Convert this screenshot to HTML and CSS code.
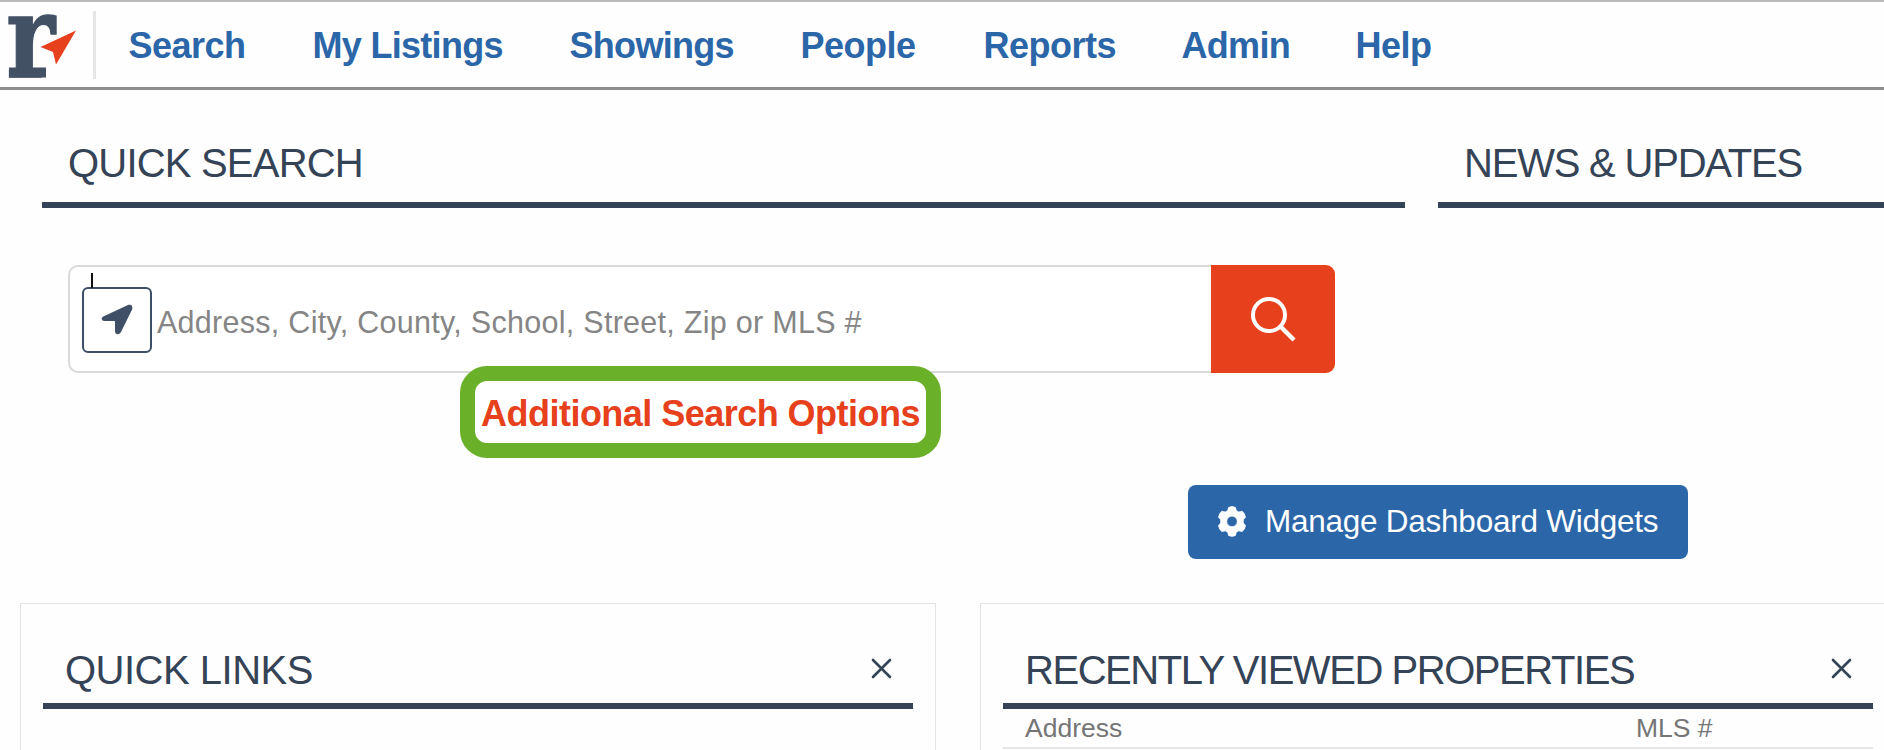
FILE: index.html
```
<!DOCTYPE html>
<html lang="en">
<head>
    <meta charset="UTF-8">
    <meta name="viewport" content="width=device-width, initial-scale=1.0">
    <title>Dashboard</title>
    <link rel="stylesheet" href="styles.css">
</head>
<body>
    <header class="header">
        <a class="logo" href="#">
            <svg width="78" height="68" viewBox="0 0 78 68">
                <text class="logo-letter" transform="translate(6.3 65.6) scale(0.8 1)" x="0" y="0">r</text>
                <rect x="9" y="56.5" width="37" height="10" fill="#435165"/>
                <path d="M76 19.5 L40.5 36 L53 41 L56 53.5 Z" fill="#e6401c"/>
            </svg>
        </a>
        <nav class="nav">
            <a href="#">Search</a>
            <a class="wide" href="#">My Listings</a>
            <a class="wide" href="#">Showings</a>
            <a href="#">People</a>
            <a href="#">Reports</a>
            <a class="wide" href="#">Admin</a>
            <a href="#">Help</a>
        </nav>
    </header>

    <main>
        <div class="top">
            <section class="quick-search">
                <h2 class="title title-search">QUICK SEARCH</h2>
                <form class="search-form">
                    <div class="search-box">
                        <span class="caret"></span>
                        <button class="locate" type="button" aria-label="Use my location">
                            <svg width="32" height="31" viewBox="0 0 32 31">
                                <path d="M2.3 12.5 L27.5 0.8 Q31.8 -0.2 31.3 5 L20 28 Q18.6 30.5 16.3 30.3 Q14.2 30 14 27.5 L14 17 L3.5 17 Q0.8 17 0.6 15 Q0.6 13.3 2.3 12.5 Z" fill="#3f4f65"/>
                            </svg>
                        </button>
                        <span class="placeholder">Address, City, County, School, Street, Zip or MLS #</span>
                    </div>
                    <button class="search-btn" type="button" aria-label="Search">
                        <svg width="46" height="46" viewBox="0 0 46 46">
                            <circle cx="19" cy="19" r="16" fill="none" stroke="#fff" stroke-width="4"/>
                            <path d="M31 31 L44 44" stroke="#fff" stroke-width="4.4"/>
                        </svg>
                    </button>
                </form>
                <a class="more-options" href="#">Additional Search Options</a>
            </section>

            <section class="news">
                <h2 class="title title-news">NEWS &amp; UPDATES</h2>
            </section>
        </div>

        <div class="manage">
            <button class="manage-btn" type="button">
                <svg width="28" height="31" viewBox="0 0 28 31">
                    <path fill="#fff" stroke="#fff" stroke-width="0.8" stroke-linejoin="round" fill-rule="evenodd" d="M10.5 1.5 Q14 -0.5 17.5 1.5 L18.2 4.6 L20.8 6.1 L24.2 5.2 Q27 7.5 27.5 11.3 L25.3 13.8 L25.3 17 L27.5 19.5 Q27 23.2 24.2 25.6 L20.8 24.8 L18.2 26.3 L17.5 29.4 Q14 31.3 10.5 29.4 L9.8 26.3 L7.2 24.8 L3.8 25.6 Q1 23.2 0.5 19.5 L2.7 17 L2.7 13.8 L0.5 11.3 Q1 7.5 3.8 5.2 L7.2 6.1 L9.8 4.6 Z M14 10.1 A5.3 5.3 0 1 0 14 20.7 A5.3 5.3 0 1 0 14 10.1 Z"/>
                </svg>
                <span>Manage Dashboard Widgets</span>
            </button>
        </div>

        <div class="widgets">
            <section class="widget">
                <div class="widget-header">
                    <h2 class="title-links">QUICK LINKS</h2>
                    <svg class="close" width="21" height="21" viewBox="0 0 21 21">
                        <path d="M2 2 L19 19 M19 2 L2 19"/>
                    </svg>
                </div>
            </section>

            <section class="widget">
                <div class="widget-header">
                    <h2 class="title-recent">RECENTLY VIEWED PROPERTIES</h2>
                    <svg class="close" width="21" height="21" viewBox="0 0 21 21">
                        <path d="M2 2 L19 19 M19 2 L2 19"/>
                    </svg>
                </div>
                <div class="table-head">
                    <span>Address</span>
                    <span>MLS #</span>
                </div>
            </section>
        </div>
    </main>
</body>
</html>
```
FILE: styles.css
```
* {
    box-sizing: border-box;
}
html, body {
    margin: 0;
    padding: 0;
    height: 750px;
    overflow: hidden;
    background: #fefefe;
    color: #354356;
    font-family: "Liberation Sans", Arial, sans-serif;
}
h2 {
    margin: 0;
    font-size: 40px;
    font-weight: normal;
    line-height: 46px;
    white-space: nowrap;
}
a {
    text-decoration: none;
}
button {
    font-family: inherit;
    border: none;
    padding: 0;
}
svg {
    display: block;
}

/* Header */
.header {
    display: flex;
    align-items: flex-start;
    height: 90px;
    padding-top: 9px;
    border-top: 2px solid #bbb;
    border-bottom: 3px solid #8f8f8f;
}
.logo {
    width: 96px;
    height: 68px;
    border-right: 3px solid #e6e6e6;
}
.logo svg {
    overflow: visible;
}
.logo-letter {
    font-family: "DejaVu Serif", serif;
    font-size: 116px;
    font-weight: bold;
    fill: #435165;
    stroke: #435165;
    stroke-width: 1.4px;
}
.nav {
    display: grid;
    grid-template-columns: 184px 257px 231px 183px 198px 174px auto;
    padding: 14px 0 0 32.5px;
}
.nav a {
    color: #2b66a9;
    font-size: 36px;
    font-weight: bold;
    line-height: 42px;
    letter-spacing: -0.5px;
    white-space: nowrap;
}
.nav .wide {
    letter-spacing: -0.7px;
}

/* Quick search and news */
.top {
    display: flex;
    gap: 33px;
    height: 395px;
    padding-left: 42px;
}
.quick-search {
    display: flex;
    flex-direction: column;
    width: 1363px;
}
.news {
    flex: 1;
}
.title {
    height: 118px;
    padding: 50px 0 0 26px;
    border-bottom: 6px solid #354356;
}
.title-search {
    letter-spacing: -0.8px;
}
.title-news {
    letter-spacing: -1.2px;
}
.search-form {
    display: flex;
    width: 1267px;
    height: 108px;
    margin: 57px 0 0 26px;
}
.search-box {
    position: relative;
    display: flex;
    align-items: center;
    flex: 1;
    padding-left: 12px;
    border: 2px solid #d9d9d9;
    border-right: none;
    border-radius: 10px 0 0 10px;
    background: #fff;
}
.caret {
    position: absolute;
    left: 21px;
    top: 6px;
    width: 2px;
    height: 15px;
    background: #111;
}
.locate {
    display: flex;
    align-items: center;
    justify-content: center;
    width: 70px;
    height: 66px;
    margin-top: 2px;
    padding-bottom: 1px;
    border: 2px solid #3f4f65;
    border-radius: 6px;
    background: #fff;
}
.placeholder {
    padding: 7px 0 0 5px;
    color: #858585;
    font-size: 30.5px;
    letter-spacing: 0.28px;
    white-space: nowrap;
}
.search-btn {
    display: flex;
    align-items: center;
    justify-content: center;
    width: 124px;
    border-radius: 0 9px 9px 0;
    background: #e6401c;
}
.more-options {
    z-index: 1;
    display: flex;
    justify-content: center;
    align-items: center;
    width: 481px;
    height: 92px;
    margin: -7px 0 0 418px;
    padding-top: 4px;
    border: 15px solid #6ab029;
    border-radius: 27px;
    background: #fff;
    color: #e6401c;
    font-size: 36px;
    font-weight: bold;
    letter-spacing: -0.53px;
    white-space: nowrap;
}

/* Manage button */
.manage {
    display: flex;
    height: 118px;
    padding-left: 1188px;
}
.manage-btn {
    display: flex;
    align-items: center;
    gap: 19px;
    width: 500px;
    height: 74px;
    padding: 0 0 2px 30px;
    border-radius: 8px;
    background: #2b66a9;
    color: #fff;
    font-size: 31.5px;
    letter-spacing: -0.25px;
    white-space: nowrap;
}

/* Widgets */
.widgets {
    display: flex;
    gap: 44px;
    padding-left: 20px;
}
.widget {
    flex: none;
    width: 916px;
    height: 160px;
    padding: 0 22px;
    border: 1px solid #e4e4e4;
}
.widget-header {
    display: flex;
    align-items: flex-start;
    justify-content: space-between;
    height: 105px;
    padding: 43px 21px 0 22px;
    border-bottom: 6px solid #354356;
}
.title-links {
    letter-spacing: -0.5px;
}
.title-recent {
    letter-spacing: -1.45px;
}
.close {
    margin-top: 11px;
    fill: none;
    stroke: #354356;
    stroke-width: 2.6;
    stroke-linecap: round;
}
.table-head {
    display: grid;
    grid-template-columns: 611px 1fr;
    height: 40px;
    padding: 4px 0 0 22px;
    border-bottom: 2px solid #e5e5e5;
    color: #757575;
    font-size: 26.5px;
    line-height: 30px;
}
```
